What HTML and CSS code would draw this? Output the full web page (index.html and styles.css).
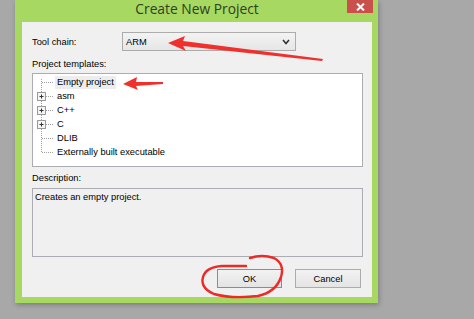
FILE: index.html
```html
<!DOCTYPE html>
<html lang="en">
<head>
  <meta charset="UTF-8" />
  <title>Create New Project</title>
  <link rel="stylesheet" href="styles.css">
</head>
<body>
  <div class="window">
    <div class="titlebar">
      <span></span>
      <span class="title">Create New Project</span>
      <span class="close">
        <svg width="9" height="8" viewBox="0 0 9 8"><path d="M1 0.5L8 7.5M8 0.5L1 7.5" stroke="#fff" stroke-width="2"/></svg>
      </span>
    </div>

    <div class="client">
      <div class="field-row">
        <label class="field-label">Tool chain:</label>
        <div class="combo">
          <span>ARM</span>
          <svg class="chevron" width="8" height="6" viewBox="0 0 8 6">
            <polyline points="1,1 4,4.5 7,1" fill="none" stroke="#333" stroke-width="1.6"/>
          </svg>
        </div>
      </div>

      <div class="group-label first">Project templates:</div>
      <div class="tree">
        <div class="tree-row">
          <svg class="branch" width="22" height="14"><path d="M8.5 4V14M9 7.5H20" stroke="#a0a0a0" stroke-dasharray="1 1"/></svg>
          <span class="node selected">Empty project</span>
        </div>
        <div class="tree-row">
          <svg class="branch" width="22" height="14"><path d="M8.5 0V14M13 7.5H20" stroke="#a0a0a0" stroke-dasharray="1 1"/><rect x="4.5" y="3.5" width="8" height="8" fill="#f4f4f4" stroke="#9a9a9a"/><path d="M6.5 7.5H10.5M8.5 5.5V9.5" stroke="#333"/></svg>
          <span class="node">asm</span>
        </div>
        <div class="tree-row">
          <svg class="branch" width="22" height="14"><path d="M8.5 0V14M13 7.5H20" stroke="#a0a0a0" stroke-dasharray="1 1"/><rect x="4.5" y="3.5" width="8" height="8" fill="#f4f4f4" stroke="#9a9a9a"/><path d="M6.5 7.5H10.5M8.5 5.5V9.5" stroke="#333"/></svg>
          <span class="node">C++</span>
        </div>
        <div class="tree-row">
          <svg class="branch" width="22" height="14"><path d="M8.5 0V14M13 7.5H20" stroke="#a0a0a0" stroke-dasharray="1 1"/><rect x="4.5" y="3.5" width="8" height="8" fill="#f4f4f4" stroke="#9a9a9a"/><path d="M6.5 7.5H10.5M8.5 5.5V9.5" stroke="#333"/></svg>
          <span class="node">C</span>
        </div>
        <div class="tree-row">
          <svg class="branch" width="22" height="14"><path d="M8.5 0V14M9 7.5H20" stroke="#a0a0a0" stroke-dasharray="1 1"/></svg>
          <span class="node">DLIB</span>
        </div>
        <div class="tree-row">
          <svg class="branch" width="22" height="14"><path d="M8.5 0V8M9 7.5H20" stroke="#a0a0a0" stroke-dasharray="1 1"/></svg>
          <span class="node">Externally built executable</span>
        </div>
      </div>

      <div class="group-label">Description:</div>
      <div class="description">Creates an empty project.</div>

      <div class="buttons">
        <button class="btn default">OK</button>
        <button class="btn">Cancel</button>
      </div>
    </div>
  </div>

  <!-- red annotations drawn over the screenshot -->
  <svg class="marks" width="474" height="319" viewBox="0 0 474 319">
    <polygon points="168,43 185,36 183,41 323,59 322,61 183,46 186,51" fill="#f0302c"/>
    <polygon points="123,84 137,77 136,82 163,82 163,84 136,86 138,90" fill="#f0302c"/>
    <path d="M250 258 Q262 254 274 258 Q285 264 281 277 Q276 292 258 296 Q232 299 214 294 Q200 288 203 277 Q206 267 222 266 L246 266"
          fill="none" stroke="#ec2a26" stroke-width="2.4" stroke-linecap="round"/>
  </svg>
</body>
</html>
```

FILE: styles.css
```css
body {
  margin: 0;
  padding: 0 0 0 15px;
  background-color: #a8a8a8;
  font-family: 'Liberation Sans', Arial, sans-serif;
  font-size: 9.3px;
  color: #000;
  height: 319px;
  overflow: hidden;
}

.window {
  width: 350px;
  background-color: #a6d862;
  padding: 0 6px 6px 7px;
  box-shadow: 1px 2px 5px rgba(0, 0, 0, 0.25);
}

.titlebar {
  display: grid;
  grid-template-columns: 1fr auto 1fr;
  height: 22px;
  align-items: start;
}

.title {
  font-family: 'Open Sans', sans-serif;
  font-size: 13.8px;
  line-height: 18px;
  color: #2f4020;
}

.close {
  justify-self: end;
  width: 26px;
  height: 13px;
  margin-right: -1px;
  background-color: #c9504b;
  display: flex;
  align-items: center;
  justify-content: center;
}

.client {
  height: 275px;
  background-color: #f0f0f0;
  padding: 10px 9px 0 10px;
  box-sizing: border-box;
}

.field-row {
  display: flex;
  align-items: center;
  height: 19px;
}

.field-label {
  width: 90px;
}

.combo {
  width: 174px;
  height: 19px;
  box-sizing: border-box;
  border: 1px solid #acacac;
  background: linear-gradient(#f3f3f3, #e6e6e6);
  display: flex;
  align-items: center;
  justify-content: space-between;
  padding: 0 5px 0 3px;
}

.group-label {
  line-height: 13px;
  margin: 5px 0 3px;
}

.group-label.first {
  margin: 7px 0 2px;
}

.tree {
  height: 94px;
  box-sizing: border-box;
  border: 1px solid #abadb3;
  background: #fff;
  padding-top: 1px;
}

.tree-row {
  display: flex;
  align-items: center;
  height: 14px;
}

.branch {
  display: block;
  flex: none;
}

.node {
  padding: 0 2px;
  line-height: 13px;
}

.node.selected {
  background-color: #ededed;
}

.description {
  height: 69px;
  box-sizing: border-box;
  border: 1px solid #abadb3;
  padding: 2px 2px;
  line-height: 13px;
}

.buttons {
  display: flex;
  justify-content: flex-end;
  gap: 13px;
  margin: 12px 2px 0 0;
}

.btn {
  width: 65px;
  height: 19px;
  font-family: 'Liberation Sans', Arial, sans-serif;
  font-size: 9.3px;
  border: 1px solid #acacac;
  background: linear-gradient(#f2f2f2, #e4e4e4);
  padding: 0;
}

.btn + .btn {
  width: 66px;
}

.btn.default {
  border-color: #4b9be6;
}

.marks {
  position: absolute;
  left: 0;
  top: 0;
  pointer-events: none;
}
```
